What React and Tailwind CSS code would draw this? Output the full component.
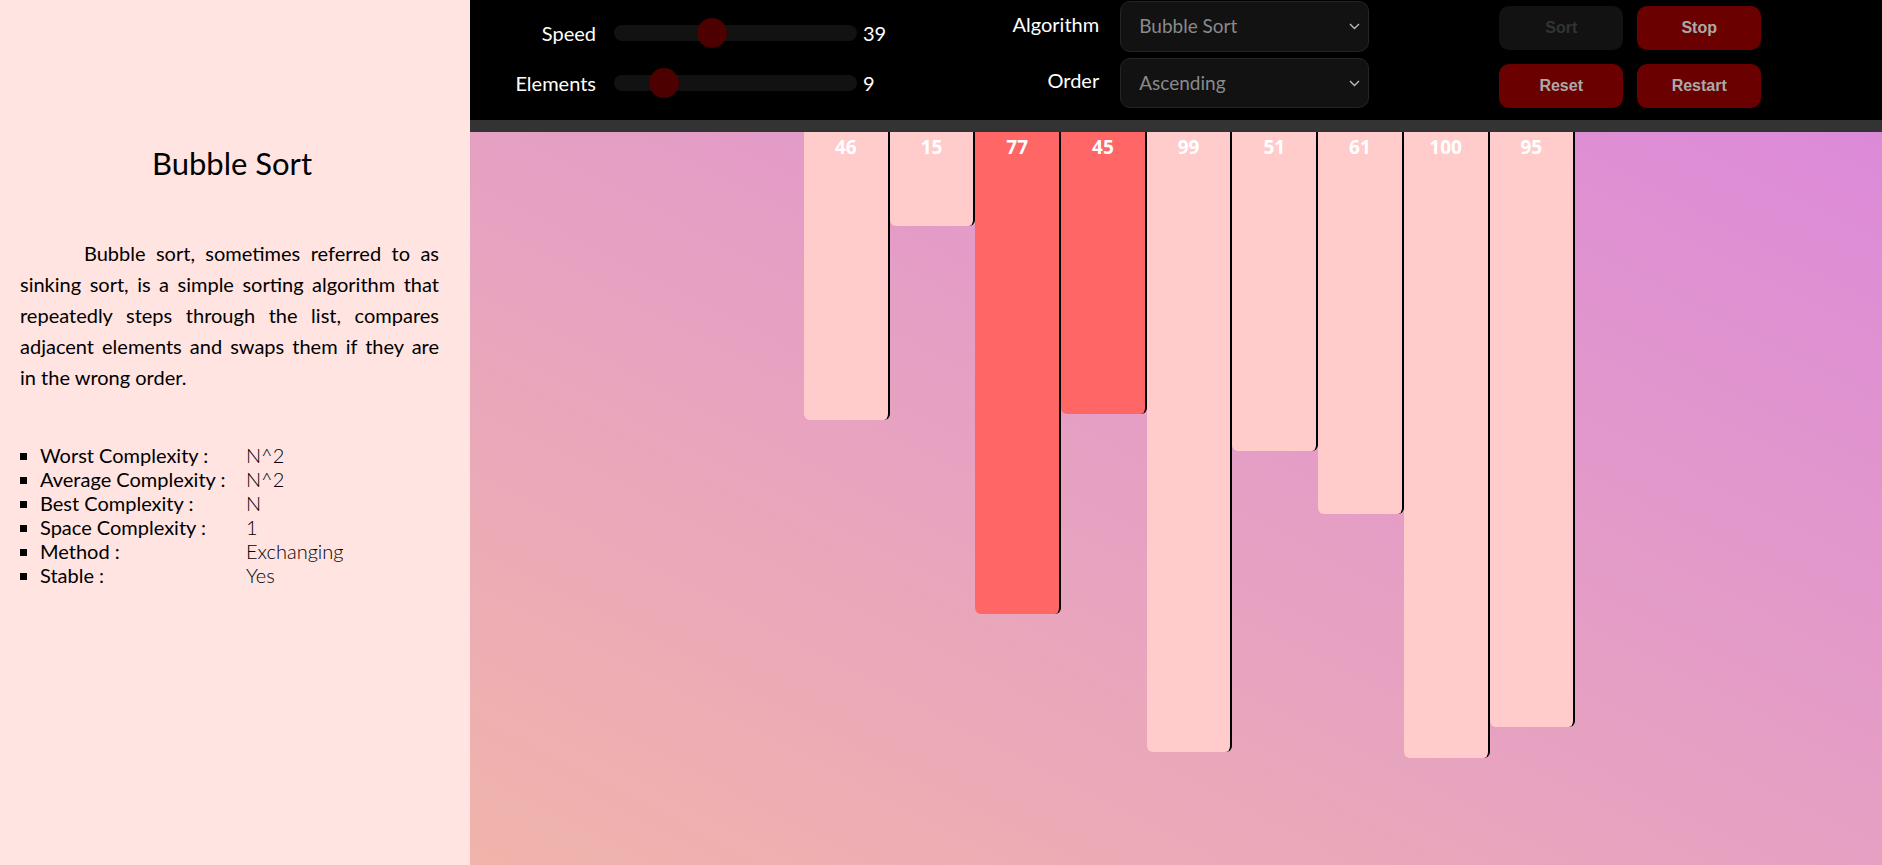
import React from "react";

const bars = [
  { v: 46 }, { v: 15 }, { v: 77, hot: true }, { v: 45, hot: true }, { v: 99 },
  { v: 51 }, { v: 61 }, { v: 100 }, { v: 95 },
];

const info = [
  ["Worst Complexity :", "N^2"],
  ["Average Complexity :", "N^2"],
  ["Best Complexity :", "N"],
  ["Space Complexity :", "1"],
  ["Method :", "Exchanging"],
  ["Stable :", "Yes"],
];

function Slider({ label, value, pos }) {
  return (
    <div className="flex h-[50px] items-center">
      <div className="w-[126px] text-right text-[20px] text-white">{label}</div>
      <div className="relative ml-[18px] h-[16px] w-[243px] rounded-full bg-[#121212]">
        <div
          className="absolute top-1/2 h-[30px] w-[30px] -translate-x-1/2 -translate-y-1/2 rounded-full bg-[#4d0000]"
          style={{ left: pos }}
        />
      </div>
      <div className="ml-[6px] text-[20px] text-white">{value}</div>
    </div>
  );
}

function Select({ label, value, className }) {
  return (
    <div className={"flex items-center " + className}>
      <div className="w-[130px] pb-[6px] text-right text-[20px] text-white">{label}</div>
      <div className="ml-[21px] flex h-full w-[249px] items-center justify-between rounded-[10px] border border-[#252525] bg-[#121212] pl-[18px] pr-[8px]">
        <span className="text-[19px] text-[#8a8a8a]">{value}</span>
        <svg width="11" height="7" viewBox="0 0 11 7" fill="none">
          <path d="M1 1l4.5 4.5L10 1" stroke="#bbb" strokeWidth="1.4" />
        </svg>
      </div>
    </div>
  );
}

function Btn({ children, off }) {
  return (
    <button
      className={
        "h-[44px] w-[124px] rounded-[10px] text-[16px] font-bold " +
        (off ? "bg-[#121212] text-[#333]" : "bg-[#6b0000] text-[#aaaaaa]")
      }
      style={{ fontFamily: "'Liberation Sans', Arial, sans-serif" }}
    >
      {children}
    </button>
  );
}

export default function App() {
  return (
    <div className="flex h-[865px] w-full overflow-hidden font-['Lato',sans-serif]">
      <aside className="w-[470px] shrink-0 bg-[#ffe4e1] text-black">
        <h1 className="mt-[143px] pr-[6px] text-center text-[31px] leading-[40px]">Bubble Sort</h1>
        <p className="mt-[55px] pl-[20px] pr-[31px] text-justify indent-[64px] text-[20px] leading-[31px]">
          Bubble sort, sometimes referred to as sinking sort, is a simple sorting algorithm that
          repeatedly steps through the list, compares adjacent elements and swaps them if they are
          in the wrong order.
        </p>
        <ul className="mt-[50px] list-[square] pl-[40px] text-[20px] leading-[24px]">
          {info.map(([k, v]) => (
            <li key={k}>
              <div className="flex">
                <span className="w-[206px]">{k}</span>
                <span className="font-light text-black">{v}</span>
              </div>
            </li>
          ))}
        </ul>
      </aside>

      <div className="flex flex-1 flex-col">
        <header className="flex h-[120px] bg-black">
          <div className="flex flex-col pt-[8px]">
            <Slider label="Speed" value="39" pos={98} />
            <Slider label="Elements" value="9" pos={50} />
          </div>
          <div className="ml-[83px] flex flex-col pt-[1px]">
            <Select label="Algorithm" value="Bubble Sort" className="h-[51px]" />
            <Select label="Order" value="Ascending" className="mt-[6px] h-[50px]" />
          </div>
          <div className="ml-[130px] grid grid-cols-[124px_124px] content-start gap-x-[14px] gap-y-[14px] pt-[6px]">
            <Btn off>Sort</Btn>
            <Btn>Stop</Btn>
            <Btn>Reset</Btn>
            <Btn>Restart</Btn>
          </div>
        </header>
        <div className="h-[12px] bg-[#333333]" />
        <main className="flex flex-1 items-start bg-linear-to-tr from-[#f0b4aa] to-[#dc8ad8] pl-[334px]">
          {bars.map((b, i) => (
            <div
              key={i}
              className={
                "w-[85.7px] shrink-0 rounded-b-[6px] border-r-2 border-black pt-[3px] text-center font-['Open_Sans',sans-serif] text-[19px] font-bold leading-[24px] text-white " +
                (b.hot ? "bg-[#ff6666]" : "bg-[#ffcccb]")
              }
              style={{ height: b.v * 6.26 }}
            >
              {b.v}
            </div>
          ))}
        </main>
      </div>
    </div>
  );
}
